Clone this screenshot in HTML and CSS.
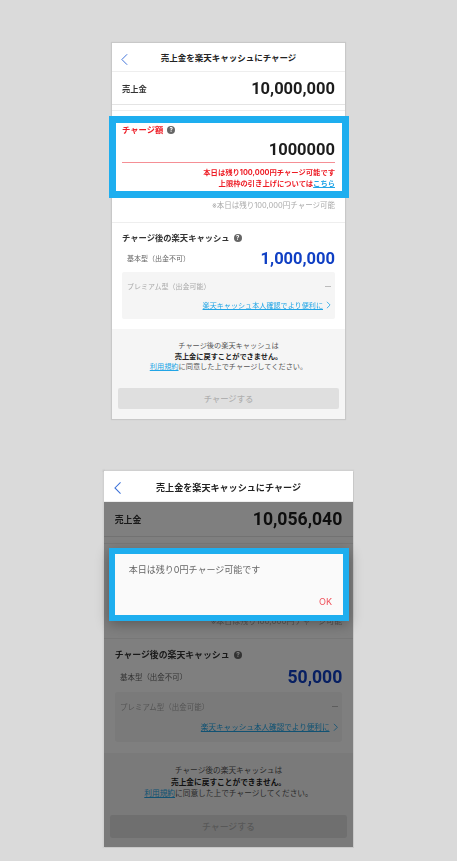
FILE: index.html
```html
<!DOCTYPE html>
<html lang="ja">
<head>
<meta charset="utf-8">
<title>売上金を楽天キャッシュにチャージ</title>
<link rel="stylesheet" href="styles.css">
</head>
<body>
<main class="page">
  <section class="screen screen-a">
    <header class="bar">
      <svg class="back" viewBox="0 0 8 14"><path d="M7 1 1 7l6 6"/></svg>
      <h1 class="bar-title">売上金を楽天キャッシュにチャージ</h1>
    </header>
    <div class="row sales">
      <span class="label">売上金</span><span class="amount">10,000,000</span>
    </div>
    <div class="charge">
      <div class="charge-label"><span>チャージ額</span><i class="help">?</i></div>
      <div class="charge-input">1000000</div>
      <p class="error">本日は残り100,000円チャージ可能です<br>上限枠の引き上げについては<a>こちら</a></p>
      <div class="frame"></div>
    </div>
    <p class="note">※本日は残り100,000円チャージ可能</p>
    <div class="after">
      <div class="after-title"><span>チャージ後の楽天キャッシュ</span><i class="help">?</i></div>
      <div class="row basic"><span>基本型（出金不可）</span><span class="blue">1,000,000</span></div>
      <div class="premium">
        <div class="row prem-row"><span>プレミアム型（出金可能）</span><span class="dash"></span></div>
        <div class="prem-link"><a>楽天キャッシュ本人確認でより便利に</a><svg class="chev" viewBox="0 0 6 10"><path d="m1 1 4 4-4 4"/></svg></div>
      </div>
    </div>
    <footer class="foot">
      <p class="terms">チャージ後の楽天キャッシュは<br><b>売上金に戻すことができません。</b><br><a>利用規約</a>に同意した上でチャージしてください。</p>
      <button class="submit">チャージする</button>
    </footer>
  </section>

  <section class="screen screen-b">
    <header class="bar">
      <svg class="back" viewBox="0 0 8 14"><path d="M7 1 1 7l6 6"/></svg>
      <h1 class="bar-title">売上金を楽天キャッシュにチャージ</h1>
    </header>
    <div class="row sales">
      <span class="label">売上金</span><span class="amount">10,056,040</span>
    </div>
    <div class="charge charge-hidden"></div>
    <p class="note">※本日は残り100,000円チャージ可能</p>
    <div class="after">
      <div class="after-title"><span>チャージ後の楽天キャッシュ</span><i class="help">?</i></div>
      <div class="row basic"><span>基本型（出金不可）</span><span class="blue">50,000</span></div>
      <div class="premium">
        <div class="row prem-row"><span>プレミアム型（出金可能）</span><span class="dash"></span></div>
        <div class="prem-link"><a>楽天キャッシュ本人確認でより便利に</a><svg class="chev" viewBox="0 0 6 10"><path d="m1 1 4 4-4 4"/></svg></div>
      </div>
    </div>
    <footer class="foot">
      <p class="terms">チャージ後の楽天キャッシュは<br><b>売上金に戻すことができません。</b><br><a>利用規約</a>に同意した上でチャージしてください。</p>
      <button class="submit">チャージする</button>
    </footer>
    <div class="scrim"></div>
    <div class="dialog">
      <p class="dialog-text">本日は残り0円チャージ可能です</p>
      <div class="dialog-ok">OK</div>
    </div>
  </section>
</main>
</body>
</html>
```
FILE: styles.css
```css
* { box-sizing: border-box; }
html, body { margin: 0; height: 100%; }
body {
  background: #dadada;
  font-family: Inter, "Noto Sans CJK JP", sans-serif;
  color: #222;
  overflow: hidden;
}
p, h1 { margin: 0; }
a { color: #22a5e6; text-decoration: underline; }
.page {
  display: flex;
  flex-direction: column;
  align-items: center;
  padding-top: 43px;
}
.screen {
  position: relative;
  width: 233px;
  background: #fff;
  box-shadow: 0 0 1px 1px #c8c8c8;
  display: flex;
  flex-direction: column;
  filter: blur(0.3px);
}
.screen-a { height: 376px; }
.screen-b {
  zoom: 1.069;
  height: 351.7px;
  margin-top: 48.6px;
  overflow: visible;
}
.bar {
  position: relative;
  z-index: 3;
  height: 29px;
  padding-top: 3px;
  background: #fff;
  border-bottom: 1px solid #eee;
  display: flex;
  align-items: center;
  justify-content: center;
  flex: none;
}
.back {
  position: absolute;
  left: 9px;
  top: 9.5px;
  width: 7px;
  height: 13px;
  fill: none;
  stroke: #3a6fd8;
  stroke-width: 1.1;
}
.bar-title { font-size: 8.5px; font-weight: 700; line-height: 1; color: #222; }
.row { display: flex; justify-content: space-between; align-items: center; }
.sales {
  height: 33px;
  padding: 0 10px;
  flex: none;
  border-bottom: 1px solid #e4e4e4;
}
.label { font-size: 8.3px; font-weight: 700; color: #333; }
.amount { font-family: Roboto, sans-serif; font-size: 16.5px; font-weight: 700; color: #1c1c1c; }
.charge {
  position: relative;
  flex: none;
  margin-top: 5px;
  border-top: 1px solid #eee;
  padding: 14px 10px 0;
  height: 86px;
}
.charge-hidden { height: 63.4px; padding: 0; }
.charge-label {
  display: flex;
  align-items: center;
  gap: 4px;
  font-size: 8.3px;
  font-weight: 700;
  color: #ee1c25;
  line-height: 10px;
}
.help {
  width: 8px;
  height: 8px;
  border-radius: 50%;
  background: #666;
  color: #fff;
  font-size: 6px;
  font-style: normal;
  font-weight: 700;
  line-height: 8px;
  text-align: center;
  flex: none;
}
.charge-input {
  height: 22px;
  margin-top: 4px;
  font-family: Roboto, sans-serif;
  font-size: 16.5px;
  font-weight: 700;
  line-height: 22px;
  text-align: right;
  color: #1c1c1c;
}
.error {
  margin-top: 1px;
  padding-top: 4px;
  border-top: 1px solid #f58f95;
  font-size: 7.3px;
  font-weight: 700;
  line-height: 11px;
  text-align: right;
  color: #ee1c25;
}
.frame {
  position: absolute;
  left: -3px;
  right: -4px;
  top: 5px;
  height: 82px;
  border: 7px solid #1eaeef;
}
.note {
  flex: none;
  height: 27px;
  padding: 4px 10px 0 0;
  font-size: 7.5px;
  line-height: 12px;
  text-align: right;
  color: #aaa;
  border-bottom: 1px solid #eee;
}
.after { flex: none; padding: 9px 10px 0; height: 106px; }
.after-title {
  display: flex;
  align-items: center;
  gap: 4px;
  font-size: 8.3px;
  font-weight: 700;
  line-height: 12px;
  color: #333;
}
.basic { height: 22px; margin-top: 3px; padding-left: 5px; font-size: 7px; color: #666; }
.blue { font-family: Roboto, sans-serif; font-size: 16.5px; font-weight: 700; color: #0f3fc4; }
.premium {
  margin-top: 3px;
  height: 47px;
  background: #f5f5f5;
  border-radius: 2px;
  padding: 8px 4px 0 5px;
  font-size: 7px;
  color: #aaa;
}
.prem-row { height: 12px; }
.dash { width: 6px; height: 1px; background: #bbb; }
.prem-link {
  display: flex;
  justify-content: flex-end;
  align-items: center;
  gap: 3px;
  margin-top: 8px;
  font-size: 7.1px;
}
.chev { width: 5px; height: 8px; fill: none; stroke: #22a5e6; stroke-width: 1; }
.foot {
  flex: 1;
  background: #f5f5f5;
  padding: 12px 6px 0;
  display: flex;
  flex-direction: column;
  align-items: stretch;
}
.terms {
  font-size: 7.2px;
  line-height: 10.7px;
  text-align: center;
  color: #555;
}
.terms b { color: #222; }
.submit {
  margin-top: 14.5px;
  height: 21px;
  border: 0;
  border-radius: 2px;
  background: #dfdfdf;
  color: #b0b0b0;
  font-family: inherit;
  font-size: 8.3px;
  font-weight: 500;
  padding: 0;
}
.scrim {
  position: absolute;
  left: 0;
  right: 0;
  top: 29px;
  bottom: 0;
  z-index: 1;
  background: rgba(0, 0, 0, 0.5);
}
.dialog {
  position: absolute;
  z-index: 2;
  left: 5px;
  top: 72px;
  width: 224px;
  height: 68px;
  background: #fafafa;
  border: 6.5px solid #1eaeef;
  padding: 9.5px 10px 0 12.5px;
  box-shadow: 0 4px 12px rgba(0, 0, 0, 0.3);
}
.dialog-text { font-size: 8.45px; line-height: 12px; color: #666; }
.dialog-ok { margin-top: 17.5px; font-size: 8.5px; line-height: 12px; text-align: right; color: #f0505a; }
```
